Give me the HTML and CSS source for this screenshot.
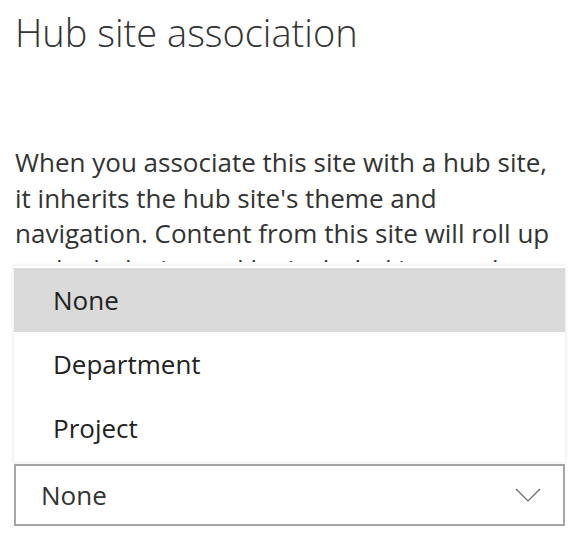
FILE: index.html
```html
<!DOCTYPE html>
<html lang="en">
<head>
    <meta charset="UTF-8">
    <meta name="viewport" content="width=device-width, initial-scale=1.0">
    <title>Hub site association</title>
    <link rel="stylesheet" href="styles.css">
</head>
<body>
    <div id="panel">
        <h1 class="title">Hub site association</h1>
        <p class="desc">When you associate this site with a hub site, it inherits the hub site's theme and navigation. Content from this site will roll up to the hub site and be included in searches of the hub site.</p>
        <div class="field">
            <div class="menu">
                <div class="opt sel">None</div>
                <div class="opt">Department</div>
                <div class="opt">Project</div>
            </div>
            <div class="dropdown">
                <span class="value">None</span>
                <svg class="chev" width="26" height="14" viewBox="0 0 26 14">
                    <polyline points="1,1 13,13 25,1" fill="none" stroke="#666" stroke-width="1.2"/>
                </svg>
            </div>
        </div>
    </div>
</body>
</html>
```

FILE: styles.css
```css
body {
    margin: 0;
    background: #fff;
    font-family: "Open Sans", "Noto Sans", sans-serif;
    color: #333;
}
#panel {
    padding: 0 16px 0 14px;
}
.title {
    font-weight: 300;
    font-size: 38px;
    line-height: 48px;
    margin: 8px 0 0 1px;
    color: #333;
}
/* clipped where the open menu starts */
.desc {
    font-size: 26px;
    line-height: 35.5px;
    margin: 89px 0 0 1px;
    height: 117px;
    overflow: hidden;
}
.field {
    position: relative;
    margin-top: 202px;
}
.menu {
    position: absolute;
    left: 0;
    right: 0;
    bottom: 100%;
    margin-bottom: 2px;
    padding: 2px 0;
    background: #fff;
    box-shadow: 0 0 3px 1px rgba(0, 0, 0, 0.08);
}
.opt {
    height: 64px;
    line-height: 64px;
    padding-left: 39px;
    font-size: 26px;
    color: #222;
}
.opt.sel {
    background: #dadada;
}
.dropdown {
    height: 58px;
    border: 2px solid #a6a6a6;
    display: flex;
    align-items: center;
    justify-content: space-between;
    padding: 0 22px 0 25px;
}
.value {
    font-size: 26px;
    color: #333;
}
.chev {
    display: block;
}
```
